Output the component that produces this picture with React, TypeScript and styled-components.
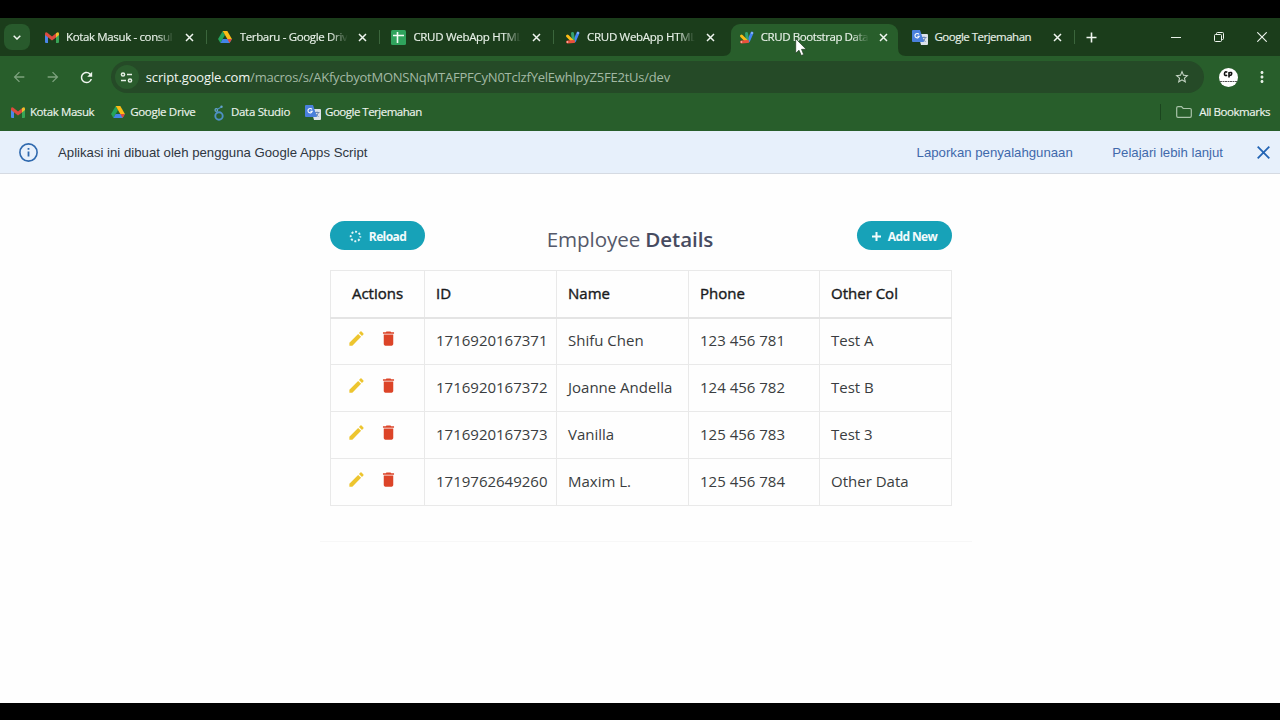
import React from 'react';
import styled, { createGlobalStyle, css } from 'styled-components';
import { MdEdit, MdDelete, MdArrowBack, MdArrowForward, MdRefresh, MdStarBorder, MdMoreVert } from 'react-icons/md';

const GlobalStyle = createGlobalStyle`
  * { box-sizing: border-box; }
  body { margin: 0; background: #000; overflow: hidden; }
`;

const chromeFont = css`
  font-family: 'Open Sans', 'Noto Sans', sans-serif;
  font-size: 11.5px;
  line-height: 16px;
  white-space: nowrap;
  -webkit-text-stroke: 0.15px currentColor;
`;

const Screen = styled.div`
  width: 1280px;
  height: 720px;
  padding: 18px 0 17px;
  background: #000;
  display: flex;
  flex-direction: column;
`;

const TabStrip = styled.div`
  height: 38px;
  flex: none;
  background: #1b3d1b;
  display: flex;
  color: #e8f1e8;
  ${chromeFont}
`;

const TabSearch = styled.button`
  width: 26px;
  height: 26px;
  margin: 6px 3px 0 4px;
  padding: 0;
  border: 0;
  border-radius: 8px;
  background: #285a2c;
  display: grid;
  place-items: center;
`;

const TabItem = styled.div<{ $active?: boolean; $sep?: boolean }>`
  position: relative;
  width: 173.7px;
  height: 32px;
  margin-top: 6px;
  padding: 0 12px 6px 11px;
  display: flex;
  align-items: center;
  ${p => p.$active && css`
    &::before {
      content: '';
      position: absolute;
      z-index: 0;
      inset: 0 3px 0 3px;
      border-radius: 9px 9px 0 0;
      background: #285e2b;
    }
  `}
  ${p => p.$sep && css`
    &::after {
      content: '';
      position: absolute;
      right: 0;
      top: 6px;
      width: 1px;
      height: 14px;
      background: #3b663c;
    }
  `}
  > * { position: relative; }
`;

const Flare = styled.svg<{ $right?: boolean }>`
  && { position: absolute; }
  width: 8px;
  height: 8px;
  bottom: 0;
  ${p => (p.$right ? 'right: -5px; transform: scaleX(-1);' : 'left: -5px;')}
`;

const Favicon = styled.span`
  width: 15px;
  height: 15px;
  margin-right: 7px;
  flex: none;
  display: grid;
  place-items: center;
`;

const TabTitle = styled.span<{ $ls: number; $fade?: boolean }>`
  width: 108px;
  letter-spacing: ${p => p.$ls}px;
  ${p => p.$fade && 'mask-image: linear-gradient(90deg, #000 84%, transparent 100%);'}
`;

const TabClose = styled.svg`
  width: 9px;
  height: 9px;
  margin-left: 10.5px;
`;

const NewTab = styled.svg`
  width: 11px;
  height: 11px;
  margin: 13.5px 0 0 10.5px;
`;

const WindowButtons = styled.div`
  margin-left: auto;
  height: 38px;
  padding-right: 13px;
  display: flex;
  align-items: center;
  gap: 33px;
`;

const Toolbar = styled.div`
  height: 42px;
  flex: none;
  background: #285e2b;
  display: flex;
  align-items: center;
  padding-left: 10px;
  svg { flex: none; }
`;

const NavButton = styled.span<{ $dim?: boolean }>`
  width: 18px;
  height: 18px;
  margin-right: 15.6px;
  display: grid;
  place-items: center;
  color: ${p => (p.$dim ? '#7da27e' : '#f1f7f1')};
`;

const AddressBar = styled.div`
  width: 1093px;
  height: 32px;
  border-radius: 16px;
  background: #254a27;
  display: flex;
  align-items: center;
  padding: 0 14px 0 4px;
  color: #a3b9a4;
  font-family: 'Open Sans', 'Noto Sans', sans-serif;
  font-size: 13px;
  letter-spacing: -0.22px;
  white-space: nowrap;
`;

const SiteInfo = styled.span`
  width: 24px;
  height: 24px;
  border-radius: 50%;
  background: #2a5c2d;
  display: grid;
  place-items: center;
  margin-right: 7px;
`;

const Host = styled.span`
  color: #f1f6f1;
  letter-spacing: -0.15px;
`;

const StarSlot = styled.span`
  margin-left: auto;
  height: 16px;
  color: #c5d5c5;
`;

const ProfileBadge = styled.svg`
  width: 19px;
  height: 19px;
  margin: 0 15px 0 15.5px;
`;

const BookmarkBar = styled.div`
  height: 33px;
  flex: none;
  background: #285e2b;
  color: #edf4ed;
  display: flex;
  align-items: center;
  padding: 0 10px 5px;
  ${chromeFont}
`;

const Bookmark = styled.span<{ $ls: number; $gap: number }>`
  display: flex;
  align-items: center;
  letter-spacing: ${p => p.$ls}px;
  margin-right: ${p => p.$gap}px;
  ${Favicon} { margin-right: 5px; }
`;

const AllBookmarks = styled.span`
  margin-left: auto;
  height: 16px;
  padding-left: 15px;
  border-left: 1px solid #1b451e;
  display: flex;
  align-items: center;
  gap: 7px;
  letter-spacing: -0.46px;
`;

const Banner = styled.div`
  height: 43px;
  flex: none;
  background: #e7f0fb;
  border-bottom: 1px solid #d5dae2;
  display: flex;
  align-items: center;
  padding: 0 10px 0 19px;
  font-family: 'Liberation Sans', Arial, sans-serif;
  font-size: 13.2px;
  color: #2f3640;
  white-space: nowrap;
`;

const BannerText = styled.span`
  margin-left: 20px;
`;

const BannerLink = styled.a<{ $gap: number }>`
  color: #3f69ab;
  margin-right: ${p => p.$gap}px;
`;

const Spacer = styled.span`
  flex: 1;
`;

const Page = styled.main`
  flex: 1;
  min-height: 0;
  background: #fefefe;
  display: flex;
  justify-content: center;
  align-items: flex-start;
  font-family: 'Open Sans', 'Noto Sans', sans-serif;
`;

const Card = styled.section`
  width: 652px;
  height: 368px;
  margin-left: 12px;
  padding: 47px 21px 0 10px;
  border-bottom: 1px solid #f7f7f7;
`;

const CardHeader = styled.header`
  display: flex;
  justify-content: space-between;
  align-items: flex-start;
  height: 49px;
  margin-right: -1px;
`;

const PillButton = styled.button`
  width: 95px;
  height: 29px;
  border: 0;
  border-radius: 15px;
  background: #17a2b8;
  color: #f2fbfc;
  display: flex;
  align-items: center;
  justify-content: center;
  gap: 7px;
  padding: 1px 0 0;
  font-family: 'Open Sans', 'Noto Sans', sans-serif;
  font-size: 12px;
  font-weight: 700;
  letter-spacing: -0.6px;
  white-space: nowrap;
`;

const Title = styled.h2`
  margin: 4px 22px 0 0;
  font-size: 20.6px;
  line-height: 28px;
  font-weight: 400;
  color: #55596a;
  letter-spacing: -0.1px;
  white-space: nowrap;
  b { font-weight: 600; color: #474b60; }
`;

const Table = styled.table`
  width: 621px;
  table-layout: fixed;
  border-collapse: collapse;
  font-size: 15px;
  color: #3a3d40;
`;

const HeadCell = styled.th<{ $w: number; $center?: boolean }>`
  width: ${p => p.$w}px;
  height: 47px;
  padding: 0 11px 1px;
  border: 1px solid #e9e9e9;
  border-bottom: 2px solid #e4e4e4;
  text-align: ${p => (p.$center ? 'center' : 'left')};
  font-weight: 400;
  -webkit-text-stroke: 0.4px currentColor;
  color: #191b1d;
  white-space: nowrap;
`;

const Cell = styled.td`
  height: 47px;
  padding: 0 0 2px 11px;
  border: 1px solid #e9e9e9;
  white-space: nowrap;
`;

const Actions = styled.span`
  display: flex;
  gap: 13px;
  padding: 0 0 3px 5px;
`;

const Pointer = styled.svg`
  position: absolute;
  left: 795px;
  top: 38px;
  z-index: 3;
`;

const Gmail = () => (
  <svg width="14" height="11" viewBox="0 0 14 11">
    <path d="M0 2v8q0 1 1 1h2V4z" fill="#4b86e8" />
    <path d="M14 2v8q0 1-1 1h-2V4z" fill="#38a557" />
    <path d="M11 1.300 12 .5q2-1 2 1.500V3l-3 2.400z" fill="#f2bd2b" />
    <path d="M0 2q0-2.500 2-1.500L7 4.500 11 1.300v4.100L7 8.500 0 3z" fill="#dd4b3e" />
  </svg>
);

const Drive = () => (
  <svg width="14" height="12" viewBox="0 0 15 13">
    <path d="M5 0 0 8.600 2.500 13 7.500 4.300z" fill="#25a35a" />
    <path d="M5 0h5l5 8.600h-5z" fill="#fbbc16" />
    <path d="M5 8.600h10L12.500 13h-10z" fill="#4285e8" />
    <path d="m12.500 13 2.500-4.400h-5z" fill="#df4a3c" />
  </svg>
);

const Sheets = () => (
  <svg width="15" height="15" viewBox="0 0 15 15">
    <rect width="15" height="15" rx="1.500" fill="#2fa35c" />
    <path d="M6.500 2v11M2 5.500h11" stroke="#f4fbf5" strokeWidth="1.600" />
  </svg>
);

const AppsScript = () => (
  <svg width="15" height="13" viewBox="0 0 15 13" strokeLinecap="round" strokeWidth="3">
    <path d="M9.500 10 13 2" stroke="#4285f4" />
    <path d="M8.500 9.500 7.500 2.500" stroke="#34a070" />
    <path d="M8 10.500 2.500 5" stroke="#fbbc16" />
    <path d="M8.500 10.500 2.500 11" stroke="#e8503c" />
    <circle cx="13" cy="2" r=".8" fill="#cfe0fb" />
    <circle cx="2.500" cy="11" r=".8" fill="#fbd5cf" />
  </svg>
);

const Translate = () => (
  <svg width="16" height="15" viewBox="0 0 16 15">
    <path d="M6 4h9q1 0 1 1v9q0 1-1 1H9z" fill="#dce2ea" />
    <path d="M9.500 7.500h5M12 6.500v1M13.500 7.500q-1 3-3.500 4M10.500 8.500q1 2 3 3" stroke="#6d88b5" fill="none" />
    <path d="M1 0h7l4 12H1q-1 0-1-1V1q0-1 1-1z" fill="#4a80dc" />
    <path d="M7 4.400a2.200 2.200 0 1 0 .3 1.800H5.300" stroke="#fff" fill="none" strokeWidth="1.100" />
  </svg>
);

const Studio = () => (
  <svg width="12" height="16" viewBox="0 0 12 16" fill="none">
    <circle cx="6" cy="11" r="3.700" stroke="#4d90c4" strokeWidth="1.900" />
    <circle cx="3.300" cy="5" r="1.300" stroke="#67a4cf" strokeWidth="1.200" />
    <circle cx="8.500" cy="1.800" r="1.200" fill="#67a4cf" />
    <path d="M3.300 6.300 4.300 8.300M4.300 4.300 8 2.200" stroke="#4d90c4" strokeWidth="1.100" />
  </svg>
);

const tabs = [
  { icon: <Gmail />, title: 'Kotak Masuk - consul', ls: -0.36, fade: true, sep: true },
  { icon: <Drive />, title: 'Terbaru - Google Driv', ls: -0.34, fade: true, sep: true },
  { icon: <Sheets />, title: 'CRUD WebApp HTML', ls: -0.3, fade: true, sep: true },
  { icon: <AppsScript />, title: 'CRUD WebApp HTML', ls: -0.3, fade: true },
  { icon: <AppsScript />, title: 'CRUD Bootstrap Data', ls: -0.42, fade: true, active: true },
  { icon: <Translate />, title: 'Google Terjemahan', ls: -0.5, sep: true },
];

const bookmarks = [
  { icon: <Gmail />, label: 'Kotak Masuk', ls: -0.42, gap: 16 },
  { icon: <Drive />, label: 'Google Drive', ls: -0.3, gap: 15.5 },
  { icon: <Studio />, label: 'Data Studio', ls: -0.32, gap: 15 },
  { icon: <Translate />, label: 'Google Terjemahan', ls: -0.5, gap: 0 },
];

const rows = [
  ['1716920167371', 'Shifu Chen', '123 456 781', 'Test A'],
  ['1716920167372', 'Joanne Andella', '124 456 782', 'Test B'],
  ['1716920167373', 'Vanilla', '125 456 783', 'Test 3'],
  ['1719762649260', 'Maxim L.', '125 456 784', 'Other Data'],
];

export default function App() {
  return (
    <Screen>
      <GlobalStyle />
      <TabStrip>
        <TabSearch>
          <svg width="8" height="5" viewBox="0 0 8 5"><path d="m.7.7 3.300 3.300L7.300.7" fill="none" stroke="#f0f6f0" strokeWidth="1.500" /></svg>
        </TabSearch>
        {tabs.map((t, i) => (
          <TabItem key={i} $active={t.active} $sep={t.sep}>
            {t.active && (
              <>
                <Flare viewBox="0 0 8 8"><path d="M8 0v8H0q8 0 8-8" fill="#285e2b" /></Flare>
                <Flare $right viewBox="0 0 8 8"><path d="M8 0v8H0q8 0 8-8" fill="#285e2b" /></Flare>
              </>
            )}
            <Favicon>{t.icon}</Favicon>
            <TabTitle $ls={t.ls} $fade={t.fade}>{t.title}</TabTitle>
            <TabClose viewBox="0 0 9 9"><path d="m1 1 7 7m0-7L1 8" stroke="#f0f6f0" strokeWidth="1.500" /></TabClose>
          </TabItem>
        ))}
        <NewTab viewBox="0 0 11 11"><path d="M5.500.5v10M.5 5.500h10" stroke="#f0f6f0" strokeWidth="1.600" /></NewTab>
        <WindowButtons>
          <svg width="10" height="10" viewBox="0 0 10 10"><path d="M0 5.500h10" stroke="#e8f0e8" /></svg>
          <svg width="10" height="10" viewBox="0 0 10 10" fill="none" stroke="#f0f6f0">
            <rect x=".5" y="2.500" width="7" height="7" rx="1" />
            <path d="M2.500 2V1.500q0-1 1-1h5q1 0 1 1v5q0 1-1 1H8" />
          </svg>
          <svg width="10" height="10" viewBox="0 0 10 10"><path d="m.3.3 9.400 9.400m0-9.400L.3 9.700" stroke="#f0f6f0" strokeWidth="1.100" /></svg>
        </WindowButtons>
      </TabStrip>
      <Toolbar>
        <NavButton $dim><MdArrowBack size={16} /></NavButton>
        <NavButton $dim><MdArrowForward size={16} /></NavButton>
        <NavButton><MdRefresh size={17} /></NavButton>
        <AddressBar>
          <SiteInfo>
            <svg width="13" height="11" viewBox="0 0 13 11" fill="none" stroke="#e6f0e6" strokeWidth="1.500">
              <circle cx="3" cy="2.500" r="1.600" /><path d="M7 2.500h5M1 8.500h5" /><circle cx="10" cy="8.500" r="1.600" />
            </svg>
          </SiteInfo>
          <Host>script.google.com</Host>
          <span>/macros/s/AKfycbyotMONSNqMTAFPFCyN0TclzfYelEwhlpyZ5FE2tUs/dev</span>
          <StarSlot><MdStarBorder size={16} /></StarSlot>
        </AddressBar>
        <ProfileBadge viewBox="0 0 19 19">
          <circle cx="9.500" cy="9.500" r="9.500" fill="#fff" />
          <path d="M8.300 4.200q-2.600-1.200-2.800 1.500t2.700 1.500M10 9.500V4.800q3-1 2.700 1T10 7.500" fill="none" stroke="#111" strokeWidth="1.600" />
          <path d="M1 13.500h17" stroke="#555" strokeDasharray="2 .5" />
        </ProfileBadge>
        <MdMoreVert size={18} color="#e6f0e6" />
      </Toolbar>
      <BookmarkBar>
        {bookmarks.map(b => (
          <Bookmark key={b.label} $ls={b.ls} $gap={b.gap}><Favicon>{b.icon}</Favicon>{b.label}</Bookmark>
        ))}
        <AllBookmarks>
          <svg width="16" height="12" viewBox="0 0 16 12"><path d="M.7 10V2Q.7.700 2 .7h3.500L7.200 2.500H14q1.300 0 1.300 1.300V10q0 1.300-1.300 1.300H2Q.7 11.300.7 10z" fill="none" stroke="#a9c3a9" strokeWidth="1.200" /></svg>
          All Bookmarks
        </AllBookmarks>
      </BookmarkBar>
      <Banner>
        <svg width="19" height="19" viewBox="0 0 19 19" fill="none" stroke="#2f69ae">
          <circle cx="9.500" cy="9.500" r="8.600" strokeWidth="1.600" />
          <path d="M9.500 8.500v5M9.500 5v1.800" strokeWidth="1.800" />
        </svg>
        <BannerText>Aplikasi ini dibuat oleh pengguna Google Apps Script</BannerText>
        <Spacer />
        <BannerLink $gap={39.500}>Laporkan penyalahgunaan</BannerLink>
        <BannerLink $gap={34}>Pelajari lebih lanjut</BannerLink>
        <svg width="13" height="13" viewBox="0 0 13 13"><path d="m.7.7 11.600 11.600m0-11.600L.7 12.300" stroke="#2264b4" strokeWidth="1.800" /></svg>
      </Banner>
      <Page>
        <Card>
          <CardHeader>
            <PillButton>
              <svg width="13" height="13" viewBox="0 0 13 13"><circle cx="6.500" cy="6.500" r="4.800" fill="none" stroke="#e4f6f8" strokeWidth="1.900" strokeDasharray="2 1.770" strokeDashoffset="1" /></svg>
              Reload
            </PillButton>
            <Title>Employee <b>Details</b></Title>
            <PillButton>
              <svg width="9" height="9" viewBox="0 0 9 9"><path d="M4.500 0v9M0 4.500h9" stroke="#f2fbfc" strokeWidth="2" /></svg>
              Add New
            </PillButton>
          </CardHeader>
          <Table>
            <thead>
              <tr>
                <HeadCell $w={94} $center>Actions</HeadCell>
                <HeadCell $w={132}>ID</HeadCell>
                <HeadCell $w={132}>Name</HeadCell>
                <HeadCell $w={131}>Phone</HeadCell>
                <HeadCell $w={132}>Other Col</HeadCell>
              </tr>
            </thead>
            <tbody>
              {rows.map(r => (
                <tr key={r[0]}>
                  <Cell><Actions><MdEdit size={19} color="#edc52f" /><MdDelete size={19} color="#dc4428" /></Actions></Cell>
                  {r.map(v => <Cell key={v}>{v}</Cell>)}
                </tr>
              ))}
            </tbody>
          </Table>
        </Card>
      </Page>
      <Pointer width="12" height="19" viewBox="0 0 12 19"><path d="M.7.7v14.600l3.300-3.100 2.300 5.300 2.400-1L6.500 11.300h4.700z" fill="#fff" stroke="#1d3b20" strokeWidth=".7" /></Pointer>
    </Screen>
  );
}
